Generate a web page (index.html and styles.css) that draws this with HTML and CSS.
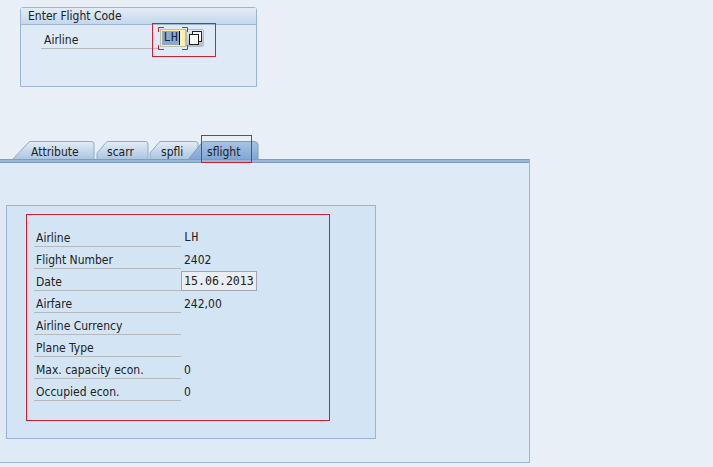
FILE: index.html
```html
<!DOCTYPE html>
<html lang="en">
<head>
<meta charset="utf-8">
<title>Enter Flight Code</title>
<link rel="stylesheet" href="styles.css">
</head>
<body>
<section class="group">
  <h2 class="group-title">Enter Flight Code</h2>
  <div class="group-row">
    <span class="group-label">Airline</span>
    <div class="input"><span class="selected">LH</span><span class="caret"></span></div>
    <button class="f4" type="button">
      <svg width="13" height="14" viewBox="0 0 13 14"><rect x="3.500" y="0.500" width="9" height="10" fill="#fff" stroke="#222"/><rect x="0.500" y="3.500" width="9" height="10" fill="#fff" stroke="#222"/></svg>
    </button>
  </div>
  <svg class="mark-input" width="64" height="34" viewBox="0 0 64 34"><rect x="0.500" y="0.500" width="63" height="33" fill="none" stroke="#cb2233"/></svg>
  <svg class="brackets" width="30" height="23" viewBox="0 0 30 23"><path d="M0.500 5V0.500H6M24 0.500H29.500V5M0.500 18V22.500H6M24 22.500H29.500V18" fill="none" stroke="#cb2233"/></svg>
</section>
<nav class="tabs">
  <div class="tab tab-attr">
    <svg class="tab-bg" width="84" height="19" viewBox="0 0 84 19"><defs><linearGradient id="g" x1="0" y1="0" x2="0" y2="1"><stop offset="0" stop-color="#e3edf6"/><stop offset="1" stop-color="#a9c4e0"/></linearGradient><linearGradient id="a" x1="0" y1="0" x2="0" y2="1"><stop offset="0" stop-color="#a7c3e3"/><stop offset="1" stop-color="#7ea3d2"/></linearGradient></defs><path d="M0 19L17 1Q18 .5 19 .5H79Q82 .5 82 3V19Z" fill="url(#g)" stroke="#8fabc8"/></svg>
    <span class="tab-text">Attribute</span>
  </div>
  <div class="tab tab-scarr">
    <svg class="tab-bg" width="54" height="19" viewBox="0 0 54 19"><path d="M1 19V12L10 1.500Q11 .5 12 .5H49Q52 .5 52 3V19Z" fill="url(#g)" stroke="#8fabc8"/></svg>
    <span class="tab-text">scarr</span>
  </div>
  <div class="tab tab-spfli">
    <svg class="tab-bg" width="50" height="19" viewBox="0 0 50 19"><path d="M1 19V12L10 1.500Q11 .5 12 .5H46Q49 .5 49 3V19Z" fill="url(#g)" stroke="#8fabc8"/></svg>
    <span class="tab-text">spfli</span>
  </div>
  <div class="tab tab-sflight">
    <svg class="tab-bg" width="72" height="20" viewBox="0 0 72 20"><path d="M0 20L15 1.500Q16 .5 17 .5H67Q71 .5 71 4V20Z" fill="url(#a)" stroke="#7c9cc4"/></svg>
    <span class="tab-text">sflight</span>
    <svg class="mark-tab" width="51" height="28" viewBox="0 0 51 28"><rect x="0.500" y="0.500" width="50" height="27" fill="none" stroke="#cb2233"/></svg>
  </div>
</nav>
<main class="panel">
  <section class="inner">
    <div class="fields">
      <div class="row"><span class="label">Airline</span><span class="value slab">LH</span></div>
      <div class="row"><span class="label">Flight Number</span><span class="value">2402</span></div>
      <div class="row"><span class="label">Date</span><span class="date code">15.06.2013</span></div>
      <div class="row"><span class="label">Airfare</span><span class="value">242,00</span></div>
      <div class="row"><span class="label">Airline Currency</span></div>
      <div class="row"><span class="label">Plane Type</span></div>
      <div class="row"><span class="label">Max. capacity econ.</span><span class="value">0</span></div>
      <div class="row"><span class="label">Occupied econ.</span><span class="value">0</span></div>
    </div>
  </section>
</main>
</body>
</html>
```
FILE: styles.css
```css
html, body { margin: 0; padding: 0; }
body {
  width: 713px;
  height: 467px;
  overflow: hidden;
  background: #e9eff7;
  color: #222;
  font-family: "DejaVu Sans", "Liberation Sans", sans-serif;
  font-stretch: condensed;
  font-size: 12px;
}
.group {
  position: relative;
  box-sizing: border-box;
  width: 237px;
  height: 80px;
  margin: 7px 0 0 20px;
  border: 1px solid #9db5d2;
  border-radius: 3px 3px 0 0;
  background: #deeaf5;
}
.group-title {
  margin: 0;
  height: 16px;
  padding-left: 7px;
  font-size: 12px;
  font-weight: 400;
  line-height: 16px;
  background: linear-gradient(#e2ecf6, #c5d8eb);
  border-bottom: 1px solid #9db5d2;
}
.group-row {
  display: flex;
  align-items: flex-start;
  margin: 4px 0 0 20px;
  height: 20px;
}
.group-label {
  box-sizing: border-box;
  width: 119px;
  height: 20px;
  padding-left: 3px;
  line-height: 23px;
  border-bottom: 1px solid #b4b9be;
}
.input {
  display: flex;
  box-sizing: border-box;
  width: 26px;
  height: 18px;
  padding: 1px;
  border: 1px solid #bdbfa8;
  background: #fdf0a6;
  font-family: "Liberation Mono", monospace;
  font-size: 12px;
  line-height: 15px;
  color: #14233a;
}
.selected { background: #8da8c8; padding: 0 1.500px; }
.caret { width: 1px; background: #000; }
.f4 {
  display: flex;
  align-items: center;
  justify-content: center;
  box-sizing: border-box;
  width: 18px;
  height: 18px;
  padding: 0;
  border: 1px solid #b3bdc9;
  border-radius: 2px;
  background: linear-gradient(#e4e8ed, #b4bfcd);
}
.mark-input { position: absolute; left: 131px; top: 15px; }
.brackets { position: absolute; left: 137px; top: 19px; }
.tabs {
  display: flex;
  height: 19px;
  margin: 54px 0 0 12px;
}
.tab { position: relative; height: 19px; }
.tab-bg { position: absolute; left: 0; top: 0; display: block; }
.tab-text { position: relative; line-height: 23px; }
.tab-attr { width: 84px; }
.tab-attr .tab-text { margin-left: 19px; }
.tab-scarr { width: 53px; }
.tab-scarr .tab-text { margin-left: 11px; }
.tab-spfli { width: 38px; }
.tab-spfli .tab-text { margin-left: 12px; }
.tab-sflight { width: 72px; }
.tab-sflight .tab-text { margin-left: 20px; }
.mark-tab { position: absolute; left: 14px; top: -6px; z-index: 2; }
.panel {
  position: relative;
  box-sizing: border-box;
  width: 530px;
  height: 304px;
  margin-top: -1px;
  padding-top: 45px;
  border-top: 1px solid #7c9cc4;
  border-right: 1px solid #9db5d2;
  border-bottom: 1px solid #9db5d2;
  background: #deeaf5;
  box-shadow: inset 0 2px 0 #9cb6d8, inset 0 3px 0 #7c9cc4;
}
.inner {
  box-sizing: border-box;
  width: 370px;
  height: 234px;
  margin-left: 6px;
  padding: 8px 0 0 19px;
  border: 1px solid #9db5d2;
  background: #d3e5f4;
}
.fields {
  box-sizing: border-box;
  width: 304px;
  height: 207px;
  padding: 10px 0 0 7px;
  border: 1px solid #cb2233;
}
.row { display: flex; height: 22px; align-items: flex-start; }
.label {
  box-sizing: border-box;
  width: 147px;
  height: 22px;
  padding-left: 2px;
  line-height: 27px;
  border-bottom: 1px solid #b4b9be;
  white-space: nowrap;
}
.code { font-family: "DejaVu Sans Mono", monospace; font-size: 11.6px; }
.slab { font-family: "Liberation Mono", monospace; font-size: 12px; }
.value { margin-left: 3px; line-height: 27px; }
.date {
  box-sizing: border-box;
  width: 76px;
  height: 20px;
  margin-top: 2px;
  padding-left: 2px;
  line-height: 18px;
  border: 1px solid #9fa6ad;
  background: #e8eef3;
}
```
